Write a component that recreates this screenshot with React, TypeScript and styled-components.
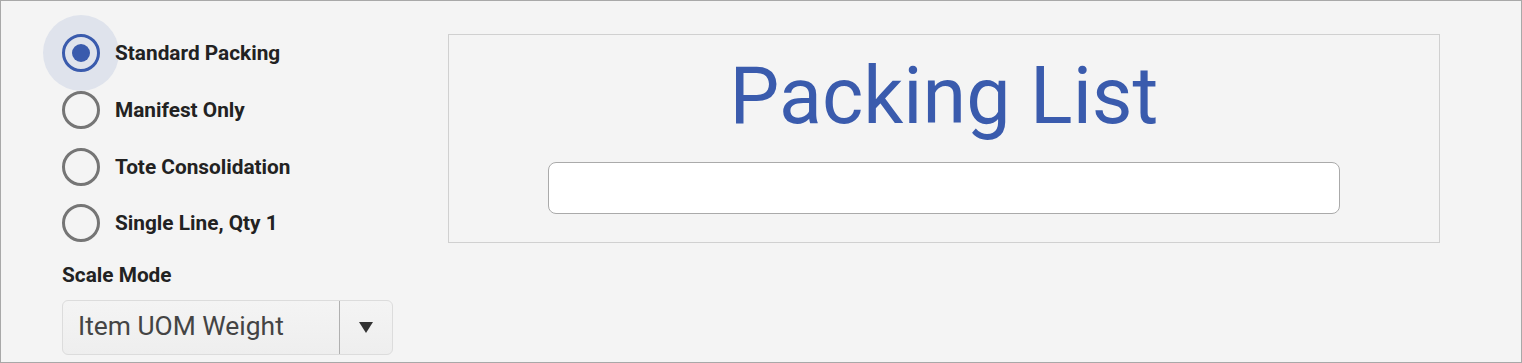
import React, { useState } from "react";
import styled, { createGlobalStyle } from "styled-components";

const GlobalStyle = createGlobalStyle`
  html, body {
    margin: 0;
    padding: 0;
    background: #f4f4f4;
  }
  body {
    font-family: Roboto, "Liberation Sans", Arial, sans-serif;
  }
`;

const Page = styled.div`
  box-sizing: border-box;
  width: 1522px;
  height: 363px;
  border: 1px solid #a8a8a8;
  background: #f4f4f4;
  display: flex;
  align-items: flex-start;
  padding: 24px 0 0 42px;
  gap: 56px;
  overflow: hidden;
`;

const Side = styled.div`
  display: flex;
  flex-direction: column;
  width: 349px;
`;

const RadioList = styled.div`
  display: flex;
  flex-direction: column;
`;

const RadioRow = styled.label`
  display: flex;
  align-items: center;
  height: 56.7px;
  cursor: pointer;
`;

const Halo = styled.span<{ $active: boolean }>`
  width: 76px;
  height: 76px;
  flex: 0 0 76px;
  border-radius: 50%;
  display: flex;
  align-items: center;
  justify-content: center;
  background: ${(p) => (p.$active ? "#dfe3ec" : "transparent")};
  margin: -9.5px 0;
`;

const Ring = styled.span<{ $active: boolean }>`
  box-sizing: border-box;
  width: 38px;
  height: 38px;
  border-radius: 50%;
  border: 3px solid ${(p) => (p.$active ? "#3a5bad" : "#757575")};
  display: flex;
  align-items: center;
  justify-content: center;
  &::after {
    content: "";
    width: 18px;
    height: 18px;
    border-radius: 50%;
    background: #3a5bad;
    display: ${(p) => (p.$active ? "block" : "none")};
  }
`;

const RadioText = styled.span`
  font-size: 20.8px;
  font-weight: 700;
  color: #222;
  margin-left: -4px;
`;

const FieldLabel = styled.div`
  font-size: 20.8px;
  font-weight: 700;
  color: #222;
  margin: 12px 0 0 19px;
  line-height: 22px;
`;

const Select = styled.div`
  box-sizing: border-box;
  margin: 14px 0 0 19px;
  width: 331px;
  height: 55px;
  border: 1px solid #dcdcdc;
  border-radius: 6px;
  background: linear-gradient(#f4f4f4, #eeeeee);
  display: flex;
  align-items: stretch;
`;

const SelectValue = styled.div`
  flex: 1;
  display: flex;
  align-items: center;
  padding: 0 0 3px 15px;
  font-size: 26.4px;
  color: #444;
  border-right: 1px solid #b0b0b0;
`;

const Arrow = styled.div`
  width: 52px;
  display: flex;
  align-items: center;
  justify-content: center;
  &::after {
    content: "";
    border-left: 7.5px solid transparent;
    border-right: 7.5px solid transparent;
    border-top: 11px solid #333;
  }
`;

const Panel = styled.div`
  box-sizing: border-box;
  margin-top: 9px;
  width: 992px;
  height: 209px;
  border: 1px solid #d0d0d0;
  display: flex;
  flex-direction: column;
  align-items: center;
`;

const Title = styled.h1`
  margin: 14px 0 0;
  font-size: 79px;
  font-weight: 400;
  line-height: 94px;
  color: #3a5bad;
`;

const ScanInput = styled.input`
  box-sizing: border-box;
  margin-top: 19px;
  width: 792px;
  height: 52px;
  background: #fff;
  border: 1px solid #aaaaaa;
  border-radius: 8px;
  font-size: 22px;
  padding: 0 12px;
  &:focus {
    outline: none;
  }
`;

const options = [
  "Standard Packing",
  "Manifest Only",
  "Tote Consolidation",
  "Single Line, Qty 1",
];

const App = () => {
  const [mode, setMode] = useState(0);

  return (
    <>
      <GlobalStyle />
      <Page>
        <Side>
          <RadioList>
            {options.map((o, i) => (
              <RadioRow key={o} onClick={() => setMode(i)}>
                <Halo $active={mode === i}>
                  <Ring $active={mode === i} />
                </Halo>
                <RadioText>{o}</RadioText>
              </RadioRow>
            ))}
          </RadioList>
          <FieldLabel>Scale Mode</FieldLabel>
          <Select>
            <SelectValue>Item UOM Weight</SelectValue>
            <Arrow />
          </Select>
        </Side>
        <Panel>
          <Title>Packing List</Title>
          <ScanInput type="text" />
        </Panel>
      </Page>
    </>
  );
};

export default App;
